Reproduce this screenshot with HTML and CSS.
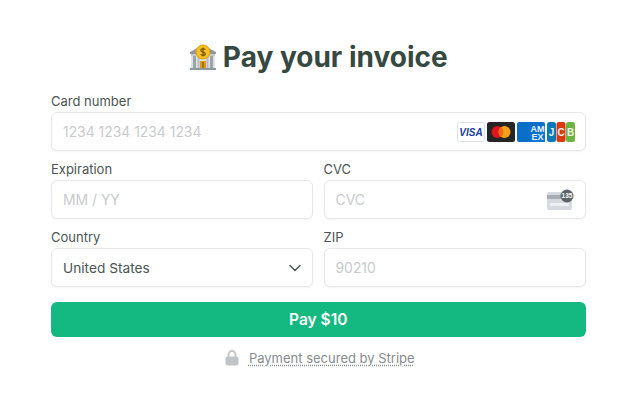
FILE: index.html
```html
<!DOCTYPE html>
<html lang="en">
<head>
<meta charset="utf-8">
<title>Pay your invoice</title>
<link rel="stylesheet" href="styles.css">
</head>
<body>
<main class="page">
  <h1 class="title">
    <svg class="bank" viewBox="0 0 28 28" width="28" height="28" aria-hidden="true">
      <path d="M1 9 14 2l13 7v2H1z" fill="#8d979e"/>
      <rect x="2" y="11" width="24" height="2" fill="#c4cbd0"/>
      <rect x="2" y="13" width="24" height="12" fill="#dfe3e6"/>
      <rect x="4" y="13" width="3" height="12" fill="#9aa4ab"/>
      <rect x="21" y="13" width="3" height="12" fill="#9aa4ab"/>
      <rect x="8.500" y="13" width="2" height="12" fill="#b4bcc2"/>
      <rect x="17.500" y="13" width="2" height="12" fill="#b4bcc2"/>
      <rect x="11" y="18" width="6" height="7" fill="#e39a12"/>
      <rect x="13.500" y="19" width="1" height="6" fill="#5a4a2a"/>
      <rect x="1" y="25" width="26" height="2" fill="#8d979e"/>
      <circle cx="14" cy="9" r="7" fill="#f7c21c" stroke="#e29c10" stroke-width="1"/>
      <path d="M16.300 6.800c-.5-.8-1.300-1.100-2.300-1.100-1.300 0-2.200.7-2.200 1.700 0 2.300 4.600 1.100 4.600 3.400 0 1-1 1.700-2.400 1.700-1 0-1.900-.4-2.400-1.200M14 4.500v9" fill="none" stroke="#6b4a0c" stroke-width="1.100"/>
    </svg>
    <span>Pay your invoice</span>
  </h1>
  <form class="form">
    <div class="field">
      <label class="label">Card number</label>
      <div class="input input-card">
        <span class="placeholder">1234 1234 1234 1234</span>
        <span class="brands">
          <svg viewBox="0 0 28 20" width="28" height="20" aria-hidden="true">
            <rect x=".5" y=".5" width="27" height="19" rx="2" fill="#fff" stroke="#dfe3e8"/>
            <text x="14" y="14" text-anchor="middle" class="visa">VISA</text>
          </svg>
          <svg viewBox="0 0 28 20" width="28" height="20" aria-hidden="true">
            <rect width="28" height="20" rx="2.500" fill="#252525"/>
            <circle cx="10.500" cy="10" r="6" fill="#e0141d"/>
            <circle cx="17.500" cy="10" r="6" fill="#f5a01a"/>
            <path d="M14 5.100a6 6 0 0 1 0 9.800 6 6 0 0 1 0-9.800z" fill="#f26a13"/>
          </svg>
          <svg viewBox="0 0 28 20" width="28" height="20" aria-hidden="true">
            <rect width="28" height="20" rx="2" fill="#0a6fc9"/>
            <path d="M13 20 28 4v16z" fill="#0d78d3"/>
            <text x="20.500" y="9.500" text-anchor="middle" class="amex">AM</text>
            <text x="20.500" y="18" text-anchor="middle" class="amex">EX</text>
          </svg>
          <svg viewBox="0 0 28 20" width="28" height="20" aria-hidden="true">
            <rect x="0" width="9" height="20" rx="2.500" fill="#0b78b8"/>
            <rect x="9.500" width="9" height="20" rx="2.500" fill="#d8390f"/>
            <rect x="19" width="9" height="20" rx="2.500" fill="#6db33f"/>
            <text x="4.500" y="14" text-anchor="middle" class="jcb">J</text>
            <text x="14" y="14" text-anchor="middle" class="jcb">C</text>
            <text x="23.500" y="14" text-anchor="middle" class="jcb">B</text>
          </svg>
        </span>
      </div>
    </div>
    <div class="row">
      <div class="field">
        <label class="label">Expiration</label>
        <div class="input"><span class="placeholder">MM / YY</span></div>
      </div>
      <div class="field">
        <label class="label">CVC</label>
        <div class="input input-card">
          <span class="placeholder">CVC</span>
          <svg viewBox="0 0 28 22" width="28" height="22" aria-hidden="true">
            <rect x="0" y="3" width="25" height="18" rx="2" fill="#d6dade"/>
            <rect x="0" y="6" width="25" height="4" fill="#a6acb0"/>
            <rect x="3" y="14" width="19" height="3" fill="#eef0f1"/>
            <circle cx="20" cy="7" r="6.500" fill="#5d6468"/>
            <text x="20" y="9.300" text-anchor="middle" class="cvc-num">135</text>
          </svg>
        </div>
      </div>
    </div>
    <div class="row">
      <div class="field">
        <label class="label">Country</label>
        <div class="input">
          <span class="value">United States</span>
          <svg viewBox="0 0 12 8" width="12" height="8" aria-hidden="true">
            <path d="M1 1.500 6 6.500l5-5" fill="none" stroke="#4a5553" stroke-width="1.500" stroke-linecap="round" stroke-linejoin="round"/>
          </svg>
        </div>
      </div>
      <div class="field">
        <label class="label">ZIP</label>
        <div class="input"><span class="placeholder">90210</span></div>
      </div>
    </div>
    <button class="pay" type="button">Pay $10</button>
    <p class="secure">
      <svg viewBox="0 0 14 16" width="14" height="16" aria-hidden="true">
        <path d="M3.500 7V4.500a3.500 3.500 0 0 1 7 0V7" fill="none" stroke="#c1c5c8" stroke-width="1.800"/>
        <rect x="0.500" y="6.500" width="13" height="9" rx="2" fill="#c1c5c8"/>
      </svg>
      <span class="secure-text">Payment secured by Stripe</span>
    </p>
  </form>
</main>
</body>
</html>
```
FILE: styles.css
```css
* { box-sizing: border-box; }
html, body { margin: 0; padding: 0; background: #fff; }
body {
  font-family: Inter, "Liberation Sans", sans-serif;
  color: #4a5553;
  width: 640px;
  height: 411px;
  overflow: hidden;
}
.page { padding: 39px 54.500px 0 51px; }
.title {
  margin: 0 0 16px;
  height: 36px;
  display: flex;
  align-items: center;
  justify-content: center;
  gap: 6px;
  font-size: 28px;
  font-weight: 700;
  line-height: 36px;
  color: #36483f;
}
.bank { flex: none; }
.form { display: flex; flex-direction: column; }
.row {
  display: grid;
  grid-template-columns: 262px 262px;
  column-gap: 10.500px;
}
.field { margin-bottom: 8px; }
.label {
  display: block;
  font-size: 13px;
  line-height: 20px;
  margin-bottom: 1px;
  color: #4a5553;
}
.input {
  height: 39px;
  display: flex;
  align-items: center;
  justify-content: space-between;
  padding: 0 11px;
  background: #fff;
  border: 1px solid #e6e8ea;
  border-radius: 6px;
  box-shadow: 0 1px 2px rgba(0, 0, 0, .05);
  font-size: 13.900px;
}
.input-card { padding-right: 9.500px; }
.placeholder { color: #c8cacd; }
.value { color: #4a5553; font-size: 13.700px; }
.brands { display: flex; gap: 2px; align-items: center; }
.visa { font: italic 700 10px "Liberation Sans", sans-serif; fill: #1a3f9c; }
.amex { font: 700 9px "Liberation Sans", sans-serif; fill: #e8f2fb; }
.jcb { font: 700 10px "Liberation Sans", sans-serif; fill: #e9f2ea; }
.cvc-num { font: 700 6.500px "Liberation Sans", sans-serif; fill: #fff; }
.pay {
  height: 35px;
  margin-top: 7px;
  border: 0;
  border-radius: 6px;
  background: #13b981;
  color: #fff;
  font-family: inherit;
  font-size: 15.500px;
  font-weight: 600;
}
.secure {
  margin: 12px 0 0;
  padding-left: 3px;
  display: flex;
  justify-content: center;
  align-items: center;
  gap: 10px;
  font-size: 13px;
  line-height: 18px;
  color: #858b8e;
}
.secure-text { text-decoration: underline dotted #8a9093; text-underline-offset: 2px; }
```
